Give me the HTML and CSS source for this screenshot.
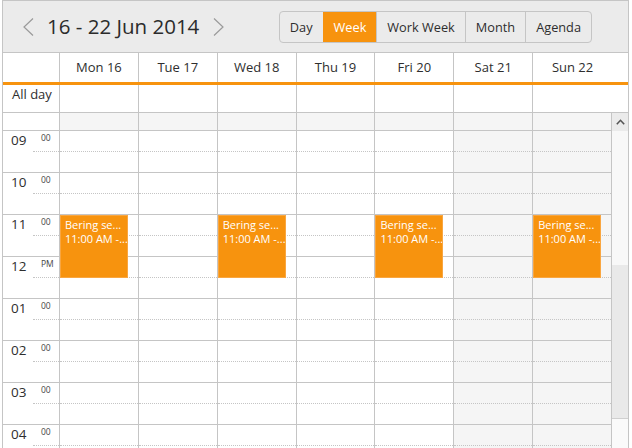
FILE: index.html
```html
<!DOCTYPE html>
<html>
<head>
<meta charset="utf-8">
<title>Scheduler</title>
<link rel="stylesheet" href="styles.css">
</head>
<body>
<div class="scheduler">
  <div class="toolbar">
    <span class="nav prev"><svg width="11" height="18" viewBox="0 0 11 18"><polyline points="10,0.5 1,9 10,17.5" fill="none" stroke="#9a9a9a" stroke-width="1.2"/></svg></span>
    <span class="title">16 - 22 Jun 2014</span>
    <span class="nav next"><svg width="11" height="18" viewBox="0 0 11 18"><polyline points="1,0.5 10,9 1,17.5" fill="none" stroke="#9a9a9a" stroke-width="1.2"/></svg></span>
    <div class="views">
      <span class="view">Day</span>
      <span class="view selected">Week</span>
      <span class="view">Work Week</span>
      <span class="view">Month</span>
      <span class="view">Agenda</span>
    </div>
  </div>

  <div class="row head">
    <div class="cell corner"></div>
    <div class="cell">Mon 16</div>
    <div class="cell">Tue 17</div>
    <div class="cell">Wed 18</div>
    <div class="cell">Thu 19</div>
    <div class="cell">Fri 20</div>
    <div class="cell">Sat 21</div>
    <div class="cell last">Sun 22</div>
    <div class="filler"></div>
  </div>

  <div class="row allday">
    <div class="cell label">All day</div>
    <div class="cell"></div>
    <div class="cell"></div>
    <div class="cell"></div>
    <div class="cell"></div>
    <div class="cell"></div>
    <div class="cell"></div>
    <div class="cell last"></div>
    <div class="filler"></div>
  </div>

  <div class="body">
    <div class="times">
      <div class="tpartial"></div>
      <div class="hour"><span class="major">09</span><span class="minor">00</span></div>
      <div class="hour"><span class="major">10</span><span class="minor">00</span></div>
      <div class="hour"><span class="major">11</span><span class="minor">00</span></div>
      <div class="hour"><span class="major">12</span><span class="minor">PM</span></div>
      <div class="hour"><span class="major">01</span><span class="minor">00</span></div>
      <div class="hour"><span class="major">02</span><span class="minor">00</span></div>
      <div class="hour"><span class="major">03</span><span class="minor">00</span></div>
      <div class="hour"><span class="major">04</span><span class="minor">00</span></div>
    </div>
    <div class="days">
      <div class="day">
        <div class="slot partial"></div>
        <div class="slot half"></div><div class="slot full"></div>
        <div class="slot half"></div><div class="slot full"></div>
        <div class="slot half"></div><div class="slot full"></div>
        <div class="slot half"></div><div class="slot full"></div>
        <div class="slot half"></div><div class="slot full"></div>
        <div class="slot half"></div><div class="slot full"></div>
        <div class="slot half"></div><div class="slot full"></div>
        <div class="slot half"></div><div class="slot full"></div>
        <div class="event"><div>Bering se...</div><div>11:00 AM -...</div></div>
      </div>
      <div class="day">
        <div class="slot partial"></div>
        <div class="slot half"></div><div class="slot full"></div>
        <div class="slot half"></div><div class="slot full"></div>
        <div class="slot half"></div><div class="slot full"></div>
        <div class="slot half"></div><div class="slot full"></div>
        <div class="slot half"></div><div class="slot full"></div>
        <div class="slot half"></div><div class="slot full"></div>
        <div class="slot half"></div><div class="slot full"></div>
        <div class="slot half"></div><div class="slot full"></div>
      </div>
      <div class="day">
        <div class="slot partial"></div>
        <div class="slot half"></div><div class="slot full"></div>
        <div class="slot half"></div><div class="slot full"></div>
        <div class="slot half"></div><div class="slot full"></div>
        <div class="slot half"></div><div class="slot full"></div>
        <div class="slot half"></div><div class="slot full"></div>
        <div class="slot half"></div><div class="slot full"></div>
        <div class="slot half"></div><div class="slot full"></div>
        <div class="slot half"></div><div class="slot full"></div>
        <div class="event"><div>Bering se...</div><div>11:00 AM -...</div></div>
      </div>
      <div class="day">
        <div class="slot partial"></div>
        <div class="slot half"></div><div class="slot full"></div>
        <div class="slot half"></div><div class="slot full"></div>
        <div class="slot half"></div><div class="slot full"></div>
        <div class="slot half"></div><div class="slot full"></div>
        <div class="slot half"></div><div class="slot full"></div>
        <div class="slot half"></div><div class="slot full"></div>
        <div class="slot half"></div><div class="slot full"></div>
        <div class="slot half"></div><div class="slot full"></div>
      </div>
      <div class="day">
        <div class="slot partial"></div>
        <div class="slot half"></div><div class="slot full"></div>
        <div class="slot half"></div><div class="slot full"></div>
        <div class="slot half"></div><div class="slot full"></div>
        <div class="slot half"></div><div class="slot full"></div>
        <div class="slot half"></div><div class="slot full"></div>
        <div class="slot half"></div><div class="slot full"></div>
        <div class="slot half"></div><div class="slot full"></div>
        <div class="slot half"></div><div class="slot full"></div>
        <div class="event"><div>Bering se...</div><div>11:00 AM -...</div></div>
      </div>
      <div class="day weekend">
        <div class="slot partial"></div>
        <div class="slot half"></div><div class="slot full"></div>
        <div class="slot half"></div><div class="slot full"></div>
        <div class="slot half"></div><div class="slot full"></div>
        <div class="slot half"></div><div class="slot full"></div>
        <div class="slot half"></div><div class="slot full"></div>
        <div class="slot half"></div><div class="slot full"></div>
        <div class="slot half"></div><div class="slot full"></div>
        <div class="slot half"></div><div class="slot full"></div>
      </div>
      <div class="day weekend">
        <div class="slot partial"></div>
        <div class="slot half"></div><div class="slot full"></div>
        <div class="slot half"></div><div class="slot full"></div>
        <div class="slot half"></div><div class="slot full"></div>
        <div class="slot half"></div><div class="slot full"></div>
        <div class="slot half"></div><div class="slot full"></div>
        <div class="slot half"></div><div class="slot full"></div>
        <div class="slot half"></div><div class="slot full"></div>
        <div class="slot half"></div><div class="slot full"></div>
        <div class="event"><div>Bering se...</div><div>11:00 AM -...</div></div>
      </div>
    </div>
    <div class="scrollbar">
      <div class="sb-up"><svg width="9" height="6" viewBox="0 0 9 6"><polyline points="0.8,5.2 4.5,1.3 8.2,5.2" fill="none" stroke="#555" stroke-width="1.6"/></svg></div>
      <div class="sb-thumb"></div>
      <div class="sb-track"></div>
      <div class="sb-down"></div>
    </div>
  </div>
</div>
</body>
</html>
```

FILE: styles.css
```css
html, body {
  margin: 0;
  padding: 0;
  background: #fff;
  overflow: hidden;
}

body {
  width: 632px;
  height: 448px;
  font-family: "Open Sans", "Noto Sans", "Liberation Sans", sans-serif;
  color: #2e2e2e;
}

.scheduler {
  margin-left: 2px;
  width: 627px;
  height: 470px;
  box-sizing: border-box;
  border: 1px solid #c5c5c5;
  display: flex;
  flex-direction: column;
}

/* toolbar */
.toolbar {
  height: 52px;
  box-sizing: border-box;
  background: #ebebeb;
  border-bottom: 1px solid #c5c5c5;
  display: flex;
  align-items: center;
  flex-shrink: 0;
}

.nav {
  display: flex;
  width: 11px;
  height: 18px;
}

.prev {
  margin-left: 20px;
}

.title {
  margin-left: 13px;
  margin-top: -2px;
  font-size: 20.5px;
  color: #2b2b2b;
  line-height: 28px;
}

.next {
  margin-left: 14px;
}

.views {
  margin-left: auto;
  margin-right: 36px;
  margin-top: 1px;
  display: flex;
  height: 32px;
  box-sizing: border-box;
  border: 1px solid #c5c5c5;
  border-radius: 4px;
  overflow: hidden;
}

.view {
  padding: 0 10px;
  font-size: 12.75px;
  line-height: 30px;
  color: #2e2e2e;
  border-left: 1px solid #c5c5c5;
}

.view:first-child {
  border-left: none;
}

.view.selected {
  background: #f7930e;
  color: #fff;
  border-left-color: #f7930e;
}

/* header rows */
.row {
  display: grid;
  grid-template-columns: 57px repeat(7, 1fr) 16px;
  flex-shrink: 0;
}

.cell {
  border-right: 1px solid #c5c5c5;
  font-size: 13px;
}

.cell.last {
  border-right: none;
}

.head {
  height: 32px;
  box-sizing: border-box;
  border-bottom: 3px solid #f7930e;
}

.head .cell {
  text-align: center;
  line-height: 28px;
}

.allday {
  height: 28px;
  box-sizing: border-box;
  border-bottom: 1px solid #c5c5c5;
}

.allday .label {
  padding: 0 0 0 9px;
  line-height: 18px;
}

/* body */
.body {
  display: flex;
  flex: 1;
  min-height: 0;
}

.times {
  width: 57px;
  flex-shrink: 0;
  box-sizing: border-box;
  border-right: 1px solid #c5c5c5;
}

.tpartial {
  height: 18px;
  box-sizing: border-box;
  border-bottom: 1px solid #c5c5c5;
}

.hour {
  height: 42px;
  box-sizing: border-box;
  border-bottom: 1px solid #c5c5c5;
  display: flex;
}

.major {
  width: 30px;
  box-sizing: border-box;
  padding-left: 8px;
  font-size: 13.5px;
  line-height: 18px;
}

.minor {
  flex: 1;
  height: 21px;
  box-sizing: border-box;
  border-bottom: 1px dotted #c5c5c5;
  font-size: 8.5px;
  line-height: 12px;
  padding: 1px 0 0 8px;
  color: #444;
}

.days {
  flex: 1;
  display: grid;
  grid-template-columns: repeat(7, 1fr);
}

.day {
  position: relative;
  border-right: 1px solid #c5c5c5;
}

.weekend {
  background: #f5f5f5;
}

.slot {
  height: 21px;
  box-sizing: border-box;
}

.slot.partial {
  height: 18px;
  background: #f5f5f5;
  border-bottom: 1px solid #c5c5c5;
}

.slot.half {
  border-bottom: 1px dotted #c5c5c5;
}

.slot.full {
  border-bottom: 1px solid #c5c5c5;
}

.event {
  position: absolute;
  top: 102px;
  left: 0;
  right: 10px;
  height: 63px;
  box-sizing: border-box;
  background: #f7930e;
  border: 1px solid #f9a640;
  color: #fff;
  font-size: 11px;
  line-height: 14px;
  padding: 2px 4px;
  white-space: nowrap;
  overflow: hidden;
}

/* scrollbar */
.scrollbar {
  width: 16px;
  flex-shrink: 0;
  display: flex;
  flex-direction: column;
}

.sb-up {
  height: 18px;
  background: #ebebeb;
  display: flex;
  justify-content: center;
  align-items: center;
}

.sb-thumb {
  height: 134px;
  background: #f8f8f8;
}

.sb-track {
  height: 153px;
  background: #e9e9e9;
  border-bottom: 1px solid #cfcfcf;
}

.sb-down {
  flex: 1;
  background: #fafafa;
}
```
